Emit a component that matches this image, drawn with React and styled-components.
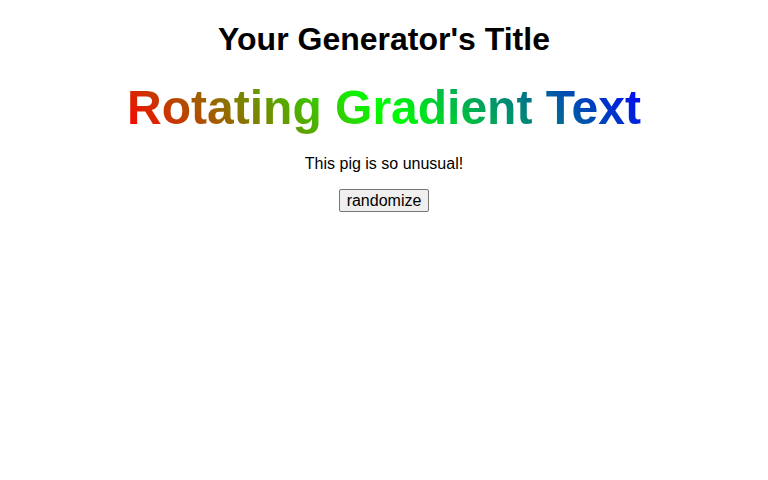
import React from "react";
import styled, { createGlobalStyle } from "styled-components";

const GlobalStyle = createGlobalStyle`
    body {
        margin: 0;
        background: #ffffff;
        font-family: "Liberation Sans", Arial, sans-serif;
        color: #000000;
    }
`;

const Page = styled.div`
    display: flex;
    flex-direction: column;
    align-items: center;
    text-align: center;
    padding-top: 21px;
`;

const Title = styled.h1`
    margin: 0;
    font-size: 32px;
    font-weight: bold;
    line-height: 37px;
`;

const GradientText = styled.div`
    display: inline-block;
    margin-top: 22px;
    font-size: 48px;
    font-weight: bold;
    line-height: 55px;
    background: linear-gradient(${props => props.angle}deg, #ff0000, #00ff00, #0000ff);
    -webkit-background-clip: text;
    background-clip: text;
    color: transparent;
`;

const Caption = styled.p`
    margin: 20px 0 0;
    font-size: 16px;
    line-height: 18px;
`;

const Button = styled.button`
    margin-top: 16px;
    font-family: "Liberation Sans", Arial, sans-serif;
    font-size: 16px;
    line-height: 19px;
    color: #000000;
    background: #efefef;
    border: 1px solid #767676;
    border-radius: 2px;
    padding: 1px 7px;
    cursor: pointer;
    &:hover {
        background: #e5e5e5;
    }
`;

const App = () => {
    return (
        <>
            <GlobalStyle />
            <Page>
                <Title>Your Generator's Title</Title>
                <GradientText angle={50}>Rotating Gradient Text</GradientText>
                <Caption>This pig is so unusual!</Caption>
                <Button>randomize</Button>
            </Page>
        </>
    );
};

export default App;
